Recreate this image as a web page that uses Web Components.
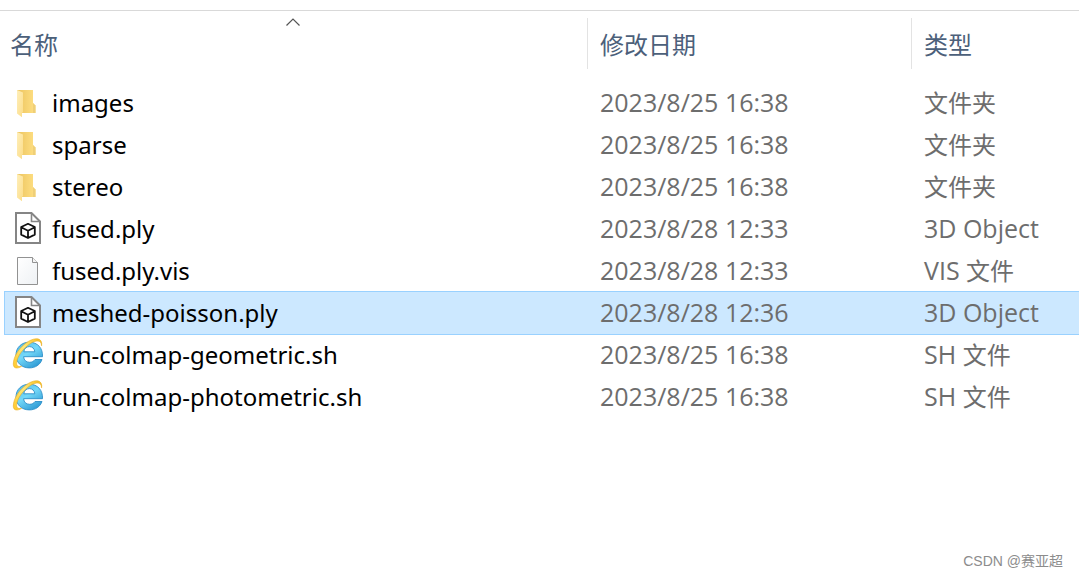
<!DOCTYPE html>
<html lang="zh-CN">
<head>
<meta charset="utf-8">
<title>文件列表</title>
<style>
html, body { height: 100%; }
body { margin: 0; background: #fff; font-family: "Open Sans", "Noto Sans CJK SC", sans-serif; overflow: hidden; }
</style>
</head>
<body>
<file-explorer>
  <file-list></file-list>
  <span slot="credit">CSDN @赛亚超</span>
</file-explorer>

<script>
const ICONS = {
  folder: `<svg viewBox="0 0 32 32"><defs><linearGradient id="b" x1="0" x2="1"><stop offset="0" stop-color="#ecc45f"/><stop offset="1" stop-color="#ffe084"/></linearGradient><linearGradient id="f" x1="0" x2="1" y2="1"><stop stop-color="#ffefba"/><stop offset="1" stop-color="#fbdc88"/></linearGradient></defs><path d="M5 4h16v13l2.500 2.500V27H6z" fill="url(#b)"/><path d="M21 17l2.500 2.500V27H21z" fill="#efcf78"/><path d="M5 4l6 2.500V26l-1 1v4.300L5 27.500z" fill="url(#f)"/></svg>`,
  object: `<svg viewBox="0 0 32 32"><path d="M4 1h15.500l8.500 8.500V31H4z" fill="#fff" stroke="#858585" stroke-width="2"/><path d="M19.500 1v8.500H28" fill="none" stroke="#858585" stroke-width="1.600"/><path d="M16 11.800l6.800 3.200v7.600L16 26l-6.800-3.400V15zM9.200 15.300l6.800 3.400 6.800-3.400M16 18.700V26" fill="none" stroke="#111" stroke-width="1.800" stroke-linejoin="round"/></svg>`,
  blank: `<svg viewBox="0 0 32 32"><defs><linearGradient id="p" x2="1" y2="1"><stop stop-color="#fff"/><stop offset="1" stop-color="#eef1f4"/></linearGradient></defs><path d="M5.500 3.500h15l5 5v22h-20z" fill="url(#p)" stroke="#929292"/><path d="M20.500 3.500v5h5" fill="#f4f4f4" stroke="#929292"/></svg>`,
  explorer: `<svg viewBox="0 0 32 32"><defs><linearGradient id="e" x1="0" y1="0" x2=".7" y2="1"><stop stop-color="#4fb4e6"/><stop offset=".5" stop-color="#74d8f8"/><stop offset="1" stop-color="#2f9bd5"/></linearGradient><linearGradient id="g" x1="0" y1="1" x2="1" y2="0"><stop stop-color="#ffc82a"/><stop offset=".55" stop-color="#ffe878"/><stop offset="1" stop-color="#f7bd20"/></linearGradient></defs><path d="M30.500 18.700H11.600c.2 3.500 2.600 5.600 6 5.600 2.500 0 4.300-1 5.400-2.800h7c-1.800 5.200-6.600 8.400-12.600 8.400C9.600 29.900 4 24.600 4 17S9.600 4.200 17.300 4.200c8.200 0 13.700 6 13.200 14.500zM11.800 13.800h11c-.3-3.200-2.400-5.200-5.500-5.200-3 0-5.100 2-5.500 5.200z" fill="url(#e)" stroke="#2d8fc8" stroke-width=".9"/><path d="M29.600 7.800C30.900-.4 23.400-.8 16.400 3.400 7.400 8.800 1.200 18.800 1.300 26.200c.1 4.700 4.400 4.600 8.300 2.100-3.200.8-5.200-.3-5-3.500.5-6.300 6.600-14.600 13.600-19.200 6-3.900 11.300-3.700 11.400 2.200z" fill="url(#g)" stroke="#eaad20" stroke-width=".6"/></svg>`
};

class FileIcon extends HTMLElement {
  connectedCallback() {
    this.attachShadow({ mode: 'open' }).innerHTML = `
      <style>:host { display: block; flex: none; width: 32px; height: 32px; } svg { display: block; width: 100%; height: 100%; }</style>
      ${ICONS[this.getAttribute('kind')]}`;
  }
}
customElements.define('file-icon', FileIcon);

class SortHeader extends HTMLElement {
  connectedCallback() {
    const sorted = this.hasAttribute('sorted');
    this.attachShadow({ mode: 'open' }).innerHTML = `
      <style>
        :host { display: block; position: relative; }
        button { display: block; width: 100%; height: 51px; margin: 0; padding: 2px 0 0 var(--inset, 12px); border: 0; border-right: 1px solid var(--rule, #e3e3e3); background: none; color: #4c607a; font: inherit; text-align: left; }
        svg { position: absolute; top: 0; left: 50%; margin-left: -11px; width: 14px; height: 8px; }
      </style>
      <button type="button"><slot></slot></button>
      ${sorted ? '<svg viewBox="0 0 14 8" aria-hidden="true"><path d="M.5 7.500L7 1l6.500 6.500" fill="none" stroke="#555" stroke-width="1.200"/></svg>' : ''}`;
  }
}
customElements.define('sort-header', SortHeader);

const FILES = [
  ['folder', 'images', '2023/8/25 16:38', '文件夹'],
  ['folder', 'sparse', '2023/8/25 16:38', '文件夹'],
  ['folder', 'stereo', '2023/8/25 16:38', '文件夹'],
  ['object', 'fused.ply', '2023/8/28 12:33', '3D Object'],
  ['blank', 'fused.ply.vis', '2023/8/28 12:33', 'VIS 文件'],
  ['object', 'meshed-poisson.ply', '2023/8/28 12:36', '3D Object', true],
  ['explorer', 'run-colmap-geometric.sh', '2023/8/25 16:38', 'SH 文件'],
  ['explorer', 'run-colmap-photometric.sh', '2023/8/25 16:38', 'SH 文件']
];

/* Chinese words are set one size smaller than the Latin text beside them. */
const withHan = text => text.replace(/[\u4e00-\u9fff]+/g, '<span class="han">$&</span>');

class FileList extends HTMLElement {
  connectedCallback() {
    const rows = FILES.map(([kind, name, date, type, selected]) => `
      <tr${selected ? ' class="selected" aria-selected="true"' : ''}>
        <td><div class="name"><file-icon kind="${kind}"></file-icon><span>${name}</span></div></td>
        <td>${date}</td><td>${withHan(type)}</td>
      </tr>`).join('');
    this.attachShadow({ mode: 'open' }).innerHTML = `
      <style>
        :host { display: block; padding-left: 5px; border-top: 1px solid #d9d9d9; font-size: 25px; line-height: 40px; }
        table { width: 100%; border-collapse: collapse; table-layout: fixed; }
        .c-name { width: 583px; }
        .c-date { width: 324px; }
        th { padding: 7px 0 13px; font-size: 24px; font-weight: 400; }
        th:first-child { --inset: 5px; }
        th:last-child { --rule: transparent; }
        td { height: 40px; padding: 0 0 2px 12px; color: #6d6d6d; white-space: nowrap; }
        td:first-child { padding-left: 7px; color: #000; }
        .name { display: flex; align-items: center; gap: 8px; height: 40px; }
        .name span { padding-top: 2px; font-family: "Noto Sans", sans-serif; font-size: 24px; }
        .han { font-size: 24px; line-height: 24px; }
        .selected { background: #cce8ff; outline: 1px solid #99d1ff; }
      </style>
      <table>
        <colgroup><col class="c-name"><col class="c-date"><col></colgroup>
        <thead><tr>
          <th aria-sort="ascending"><sort-header sorted>名称</sort-header></th>
          <th><sort-header>修改日期</sort-header></th>
          <th><sort-header>类型</sort-header></th>
        </tr></thead>
        <tbody>${rows}</tbody>
      </table>`;
  }
}
customElements.define('file-list', FileList);

class FileExplorer extends HTMLElement {
  connectedCallback() {
    this.attachShadow({ mode: 'open' }).innerHTML = `
      <style>
        :host { display: flex; flex-direction: column; box-sizing: border-box; min-height: 100vh; padding-top: 10px; }
        footer { margin-top: auto; padding: 0 16px 7px 0; color: #8c8c8c; font: 14px/20px "Liberation Sans", "Noto Sans CJK SC", sans-serif; text-align: right; }
      </style>
      <slot></slot>
      <footer><slot name="credit"></slot></footer>`;
  }
}
customElements.define('file-explorer', FileExplorer);
</script>
</body>
</html>
